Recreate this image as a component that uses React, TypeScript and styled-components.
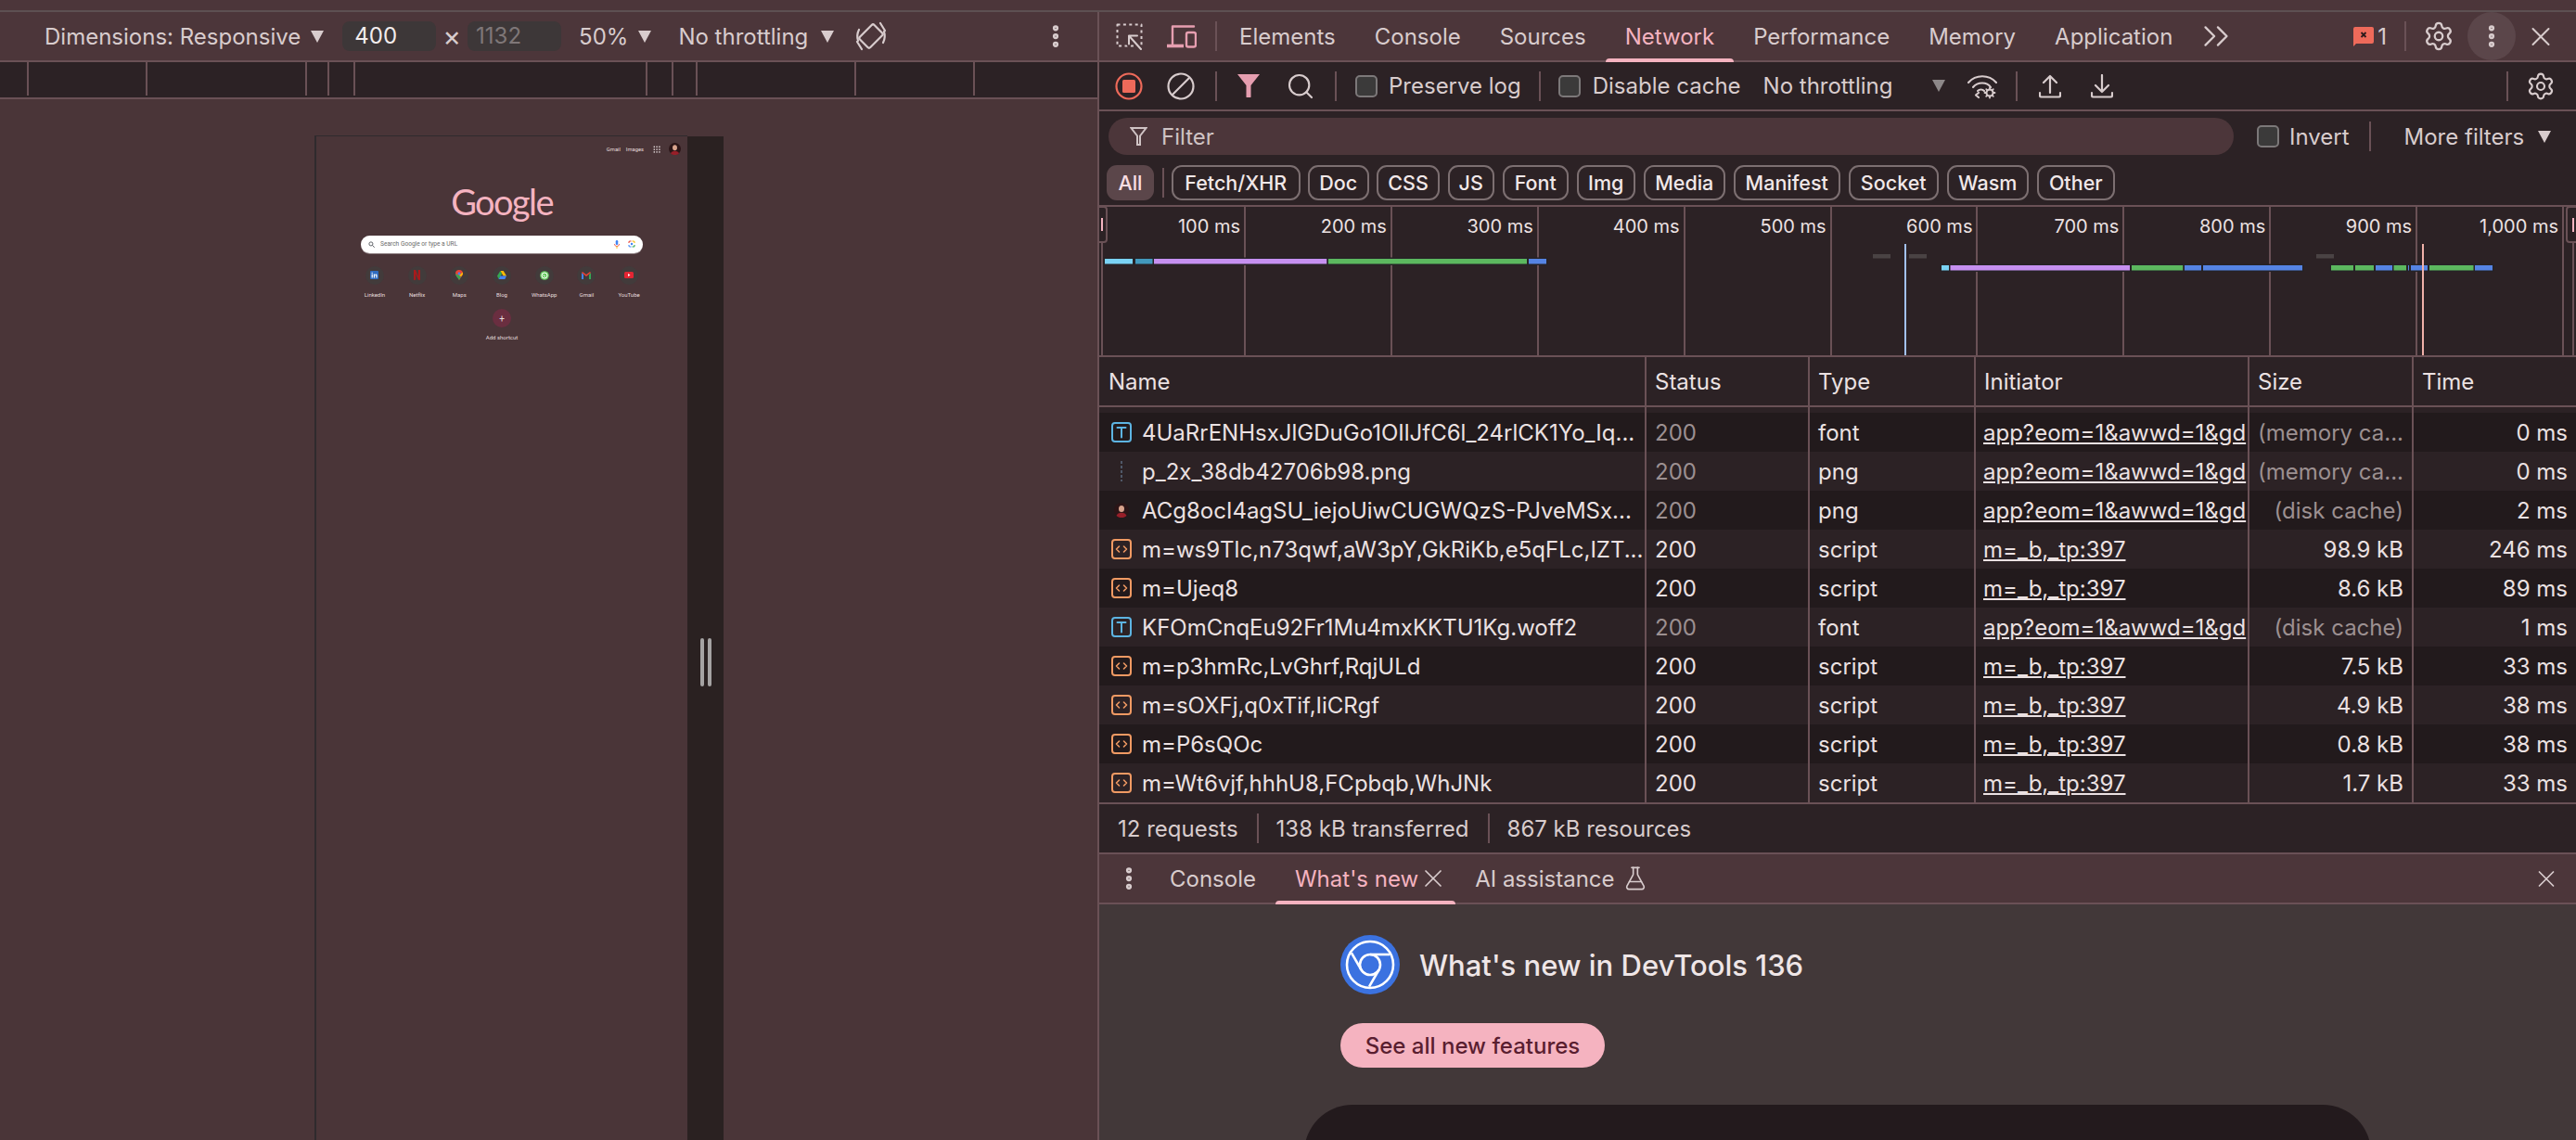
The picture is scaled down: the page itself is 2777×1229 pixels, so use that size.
import React from "react";
import styled, { createGlobalStyle } from "styled-components";
import { Settings, X, Search, ChevronsRight, FlaskConical, EllipsisVertical } from "lucide-react";

const line = "#6a5156";
const barBg = "#4c363a";
const darkBg = "#2c2225";
const pink = "#f5b3c0";
const txt = "#ebe1e2";
const dim = "#d8cccd";

const Global = createGlobalStyle`
  html, body { margin: 0; padding: 0; background: ${barBg}; }
  body { font-family: Inter, "Liberation Sans", sans-serif; font-size: 24px; color: ${txt}; overflow: hidden; }
  * { box-sizing: border-box; }
`;

const Page = styled.div`
  width: 2777px;
  height: 1229px;
  display: flex;
  flex-direction: column;
  overflow: hidden;
`;

const TopStrip = styled.div`
  height: 13px;
  flex: none;
  background: ${barBg};
  border-bottom: 2px solid #5d5052;
`;

const Main = styled.div`
  flex: 1;
  min-height: 0;
  display: flex;
`;

/* left: device mode */
const LeftPane = styled.div`
  width: 1185px;
  flex: none;
  display: flex;
  flex-direction: column;
  border-right: 2px solid ${line};
  background: #4a3538;
`;

const DeviceBar = styled.div`
  height: 54px;
  flex: none;
  display: flex;
  align-items: center;
  border-bottom: 2px solid ${line};
  background: ${barBg};
  padding-left: 48px;
`;

const Label = styled.span<{ $ml?: number; $c?: string }>`
  margin-left: ${(p) => p.$ml ?? 0}px;
  color: ${(p) => p.$c ?? dim};
  white-space: nowrap;
  flex: none;
`;

const Times = styled(Label)`
  font-size: 30px;
  line-height: 30px;
`;

const Arrow = styled.span<{ $ml?: number; $c?: string }>`
  margin-left: ${(p) => p.$ml ?? 0}px;
  flex: none;
  width: 0;
  height: 0;
  border-left: 7.5px solid transparent;
  border-right: 7.5px solid transparent;
  border-top: 13px solid ${(p) => p.$c ?? dim};
`;

const SizeInput = styled.div<{ $ml: number; $w: number; $muted?: boolean }>`
  margin-left: ${(p) => p.$ml}px;
  width: ${(p) => p.$w}px;
  height: 32px;
  flex: none;
  border-radius: 8px;
  background: #3d3738;
  padding-left: ${(p) => (p.$muted ? 9 : 13)}px;
  line-height: 32px;
  color: ${(p) => (p.$muted ? "#7f7778" : "#f2ecec")};
`;

const Ruler = styled.div`
  height: 40px;
  flex: none;
  display: flex;
  background: ${darkBg};
  border-bottom: 2px solid ${line};
  padding-bottom: 2px;
`;

const RulerTick = styled.div<{ $w: number }>`
  width: ${(p) => p.$w}px;
  flex: none;
  border-right: 2px solid ${line};
`;

const Canvas = styled.div`
  flex: 1;
  min-height: 0;
  display: flex;
  padding: 39px 0 0 339px;
  background: #4a3538;
`;

const Device = styled.div`
  width: 402px;
  flex: none;
  display: flex;
  flex-direction: column;
  align-items: center;
  border-left: 2px solid #2f2a2d;
  border-top: 1px solid #2f2a2d;
  font-family: Roboto, Arial, sans-serif;
  color: #e6dcdd;
`;

const DeviceHeader = styled.div`
  width: 100%;
  height: 27px;
  flex: none;
  display: flex;
  align-items: center;
  justify-content: flex-end;
  padding-right: 7px;
  font-size: 5.8px;
`;

const HeaderLink = styled.span<{ $mr: number }>`
  display: flex;
  margin-right: ${(p) => p.$mr}px;
`;

const Logo = styled.div`
  margin-top: 20px;
  height: 56px;
  font-family: Lato, sans-serif;
  font-size: 38px;
  line-height: 46px;
  letter-spacing: -1.6px;
  color: ${pink};
`;

const SearchBox = styled.div`
  width: 304px;
  height: 19.5px;
  flex: none;
  margin-top: 3.5px;
  display: flex;
  align-items: center;
  padding: 0 8px 0 8px;
  border-radius: 10px;
  background: #fff;
  box-shadow: 0 1px 0 #8d7f82;
  font-size: 6.6px;
  color: #6b6b6b;
`;

const SearchText = styled.span`
  margin-left: 6px;
  flex: 1;
`;

const Shortcuts = styled.div`
  width: 320px;
  margin-top: 13.5px;
  display: flex;
  flex-wrap: wrap;
  justify-content: center;
`;

const Tile = styled.div`
  width: 45.7px;
  height: 46.5px;
  display: flex;
  flex-direction: column;
  align-items: center;
  font-size: 6px;
  white-space: nowrap;
`;

const TileCircle = styled.div<{ $add?: boolean }>`
  width: 20px;
  height: 20px;
  flex: none;
  border-radius: 50%;
  display: flex;
  align-items: center;
  justify-content: center;
  background: ${(p) => (p.$add ? "#6a2e40" : "#423b3b")};
  color: #e6dcdd;
  font-size: 10px;
  margin-bottom: 7px;
`;

const ResizeBar = styled.div`
  width: 39px;
  flex: none;
  margin-top: 1px;
  display: flex;
  justify-content: center;
  gap: 4px;
  padding-top: 541px;
  background: #2a2121;
`;

const Grip = styled.div`
  width: 4px;
  height: 52px;
  border-radius: 2px;
  background: #a5a3a3;
`;

/* right: devtools */
const Tools = styled.div`
  flex: 1;
  min-width: 0;
  display: flex;
  flex-direction: column;
  background: ${darkBg};
`;

const MainTabs = styled.div`
  height: 54px;
  flex: none;
  display: flex;
  align-items: center;
  padding-left: 4px;
  background: ${barBg};
  border-bottom: 2px solid ${line};
`;

const IconSlot = styled.div<{ $w?: number; $ml?: number; $mr?: number }>`
  width: ${(p) => p.$w ?? 56}px;
  margin-left: ${(p) => p.$ml ?? 0}px;
  margin-right: ${(p) => p.$mr ?? 0}px;
  flex: none;
  display: flex;
  align-items: center;
  justify-content: center;
  color: ${dim};
`;

const Sep = styled.div<{ $ml?: number; $mr?: number; $h?: number }>`
  width: 2px;
  height: ${(p) => p.$h ?? 32}px;
  flex: none;
  margin-left: ${(p) => p.$ml ?? 0}px;
  margin-right: ${(p) => p.$mr ?? 0}px;
  background: ${line};
`;

const Tab = styled.div<{ $active?: boolean; $ml?: number }>`
  position: relative;
  height: 100%;
  flex: none;
  display: flex;
  align-items: center;
  margin-left: ${(p) => p.$ml ?? 0}px;
  padding: 0 21px;
  color: ${(p) => (p.$active ? pink : dim)};
  ${(p) =>
    p.$active &&
    `&::after {
      content: "";
      position: absolute;
      left: 0;
      right: 0;
      bottom: -2px;
      height: 4px;
      border-radius: 4px 4px 0 0;
      background: ${pink};
    }`}
`;

const TabClose = styled(X)`
  margin: 0 -13px 0 0;
  color: ${dim};
`;

const Flask = styled(FlaskConical)`
  margin-left: 8px;
`;

const Spring = styled.div`
  flex: 1;
`;

const HoverDots = styled.div`
  width: 52px;
  height: 52px;
  flex: none;
  margin-left: 14px;
  border-radius: 50%;
  background: #5b464a;
  display: flex;
  align-items: center;
  justify-content: center;
  color: ${dim};
`;

const NetBar = styled.div`
  height: 53px;
  flex: none;
  display: flex;
  align-items: center;
  padding-left: 4px;
  border-bottom: 2px solid ${line};
`;

const Check = styled.div<{ $ml: number }>`
  width: 24px;
  height: 24px;
  flex: none;
  margin-left: ${(p) => p.$ml}px;
  border: 2px solid #7c7879;
  border-radius: 5px;
  background: #3b3a3a;
`;

const FilterSection = styled.div`
  height: 103px;
  flex: none;
  display: flex;
  flex-direction: column;
  border-bottom: 2px solid ${line};
`;

const FilterRow = styled.div`
  height: 40px;
  margin-top: 7px;
  flex: none;
  display: flex;
  align-items: center;
  padding-left: 10px;
`;

const FilterInput = styled.div`
  width: 1213px;
  height: 40px;
  flex: none;
  display: flex;
  align-items: center;
  gap: 15px;
  padding-left: 23px;
  border-radius: 20px;
  background: ${barBg};
  color: #cfc3c4;
`;

const ChipRow = styled.div`
  margin-top: 11px;
  height: 38px;
  flex: none;
  display: flex;
  align-items: center;
  gap: 8.5px;
  padding-left: 8px;
  font-weight: 500;
  font-size: 21.5px;
`;

const Chip = styled.div<{ $w: number; $active?: boolean }>`
  width: ${(p) => p.$w}px;
  height: 38px;
  flex: none;
  display: flex;
  align-items: center;
  justify-content: center;
  border-radius: 11px;
  border: ${(p) => (p.$active ? "none" : "2px solid #7c6f71")};
  background: ${(p) => (p.$active ? "#5b464a" : "transparent")};
  color: ${(p) => (p.$active ? "#f8dde2" : "#f1e8e9")};
`;

const Overview = styled.div`
  position: relative;
  height: 162px;
  flex: none;
  display: flex;
  border-bottom: 2px solid ${line};
  overflow: hidden;
`;

const TickCell = styled.div<{ $w: number }>`
  width: ${(p) => p.$w}px;
  flex: none;
  border-right: 2px solid ${line};
  padding: 8px 4px 0 0;
  text-align: right;
  font-size: 20px;
  line-height: 26px;
  white-space: nowrap;
`;

const OverviewDrawing = styled.svg`
  position: absolute;
  left: 0;
  top: 0;
`;

const TableRow = styled.div<{ $h: number; $bg?: string; $line?: boolean }>`
  height: ${(p) => p.$h}px;
  flex: none;
  display: grid;
  grid-template-columns: 590px 176px 179px 295px 177px 1fr;
  background: ${(p) => p.$bg ?? darkBg};
  border-bottom: ${(p) => (p.$line ? `2px solid ${line}` : "none")};
`;

const Cell = styled.div<{ $right?: boolean; $muted?: boolean; $link?: boolean; $last?: boolean }>`
  min-width: 0;
  display: flex;
  align-items: center;
  justify-content: ${(p) => (p.$right ? "flex-end" : "flex-start")};
  padding: 0 9px;
  border-right: ${(p) => (p.$last ? "none" : `2px solid ${line}`)};
  color: ${(p) => (p.$muted ? "#9c9091" : txt)};
  white-space: nowrap;
  overflow: hidden;
  text-decoration: ${(p) => (p.$link ? "underline" : "none")};
  text-underline-offset: 2px;
`;

const NameHead = styled(Cell)`
  padding-left: 10px;
`;

const NameCell = styled(Cell)`
  gap: 11px;
  padding-left: 13px;
`;

const InitCell = styled(Cell)`
  padding: 0 0 0 8px;
`;

const FileIcon = styled.span`
  width: 22px;
  height: 22px;
  flex: none;
  display: flex;
  align-items: center;
  justify-content: center;
`;

const Footer = styled.div`
  height: 54px;
  flex: none;
  display: flex;
  align-items: center;
  padding-left: 20px;
  border-bottom: 2px solid ${line};
  color: ${dim};
`;

const DrawerTabs = styled.div`
  height: 54px;
  flex: none;
  display: flex;
  align-items: center;
  background: ${barBg};
  border-bottom: 2px solid ${line};
`;

const DrawerBody = styled.div`
  position: relative;
  flex: 1;
  min-height: 0;
  background: #423839;
  padding: 33px 0 0 260px;
  overflow: hidden;
`;

const NewsHead = styled.div`
  display: flex;
  align-items: center;
  gap: 21px;
  font-size: 31px;
  font-weight: 500;
  color: #efe6e7;
`;

const NewsButton = styled.div`
  width: 285px;
  height: 48px;
  margin-top: 31px;
  display: flex;
  align-items: center;
  justify-content: center;
  border-radius: 24px;
  background: ${pink};
  color: #5a1e30;
  font-weight: 500;
`;

const NewsCard = styled.div`
  width: 1150px;
  height: 80px;
  margin: 40px 0 0 -39px;
  border-radius: 52px 52px 0 0;
  background: #231a1d;
`;

/* icons */
const Svg = ({ w, h, children, stroke = "currentColor", sw = 2 }: { w: number; h: number; children: React.ReactNode; stroke?: string; sw?: number }) => (
  <svg width={w} height={h} viewBox={`0 0 ${w} ${h}`} fill="none" stroke={stroke} strokeWidth={sw} strokeLinecap="round" strokeLinejoin="round">
    {children}
  </svg>
);

const InspectIcon = () => (
  <Svg w={29} h={29}>
    <rect x="1.5" y="1.5" width="26" height="23" strokeDasharray="3 3.4" strokeLinecap="butt" />
    <path d="M14 13.5L27 28M14 13.5h9M14 13.5v9" stroke="#4c363a" strokeWidth="5" />
    <path d="M14 13.5L27 28M14 13.5h9M14 13.5v9" />
  </Svg>
);

const DeviceIcon = () => (
  <Svg w={33} h={25} stroke="#e69eb0" sw={2.4}>
    <path d="M7 1.5h23M7 1.5v19" />
    <path d="M1 22.5h18" strokeWidth="3.6" strokeLinecap="butt" />
    <rect x="22" y="8" width="10" height="15.5" rx="2" />
  </Svg>
);

const Dots = ({ h = 30 }: { h?: number }) => <EllipsisVertical size={h} strokeWidth={3} />;

const ErrorBadge = () => (
  <svg width="22" height="21" viewBox="0 0 22 21">
    <path d="M2 0h18a2 2 0 0 1 2 2v14a2 2 0 0 1-2 2H3l-3 3V2a2 2 0 0 1 2-2z" fill="#ee6a5a" />
    <path d="M8.5 6l5 5M13.5 6l-5 5" stroke="#2c1a1c" strokeWidth="1.8" />
  </svg>
);

const RecordIcon = () => (
  <svg width="30" height="30" viewBox="0 0 30 30">
    <circle cx="15" cy="15" r="13.5" fill="none" stroke="#ee6a5a" strokeWidth="2.2" />
    <rect x="8" y="8" width="14" height="14" rx="1.5" fill="#ee6a5a" />
  </svg>
);

const ClearIcon = () => (
  <Svg w={30} h={30} sw={2.2}>
    <circle cx="15" cy="15" r="13.5" />
    <path d="M6 24L24 6" />
  </Svg>
);

const Funnel = ({ solid }: { solid?: boolean }) =>
  solid ? (
    <svg width="24" height="25" viewBox="0 0 24 25">
      <path d="M0 0h24L14.5 12v12a2 2 0 0 1-5 0V12z" fill="#e69eb0" />
    </svg>
  ) : (
    <svg width="19" height="20" viewBox="0 0 19 20" fill="none" stroke="#cfc3c4" strokeWidth="2">
      <path d="M1.5 1h16L11 9.5V19H8V9.5z" />
    </svg>
  );

const WifiGear = () => (
  <Svg w={34} h={28} sw={2.2}>
    <path d="M2 10C10 1 24 1 32 10M7 15c5-6 15-6 19 0M12 19c2-2 5-2 7 0" />
    <path d="M13 21l-3 2.5 3 2.5" />
    <circle cx="25" cy="21" r="3.6" strokeWidth="2" />
    <path d="M25 15.5v2M25 24.5v2M19.5 21h2M28.5 21h2M21.2 17.2l1.4 1.4M27.4 23.4l1.4 1.4M21.2 24.8l1.4-1.4M27.4 18.6l1.4-1.4" strokeWidth="1.8" />
  </Svg>
);

const UploadIcon = () => (
  <Svg w={24} h={26} sw={2.2}>
    <path d="M12 20V2M5 9l7-7 7 7M1 20v3a1.5 1.5 0 0 0 1.5 1.5h19A1.5 1.5 0 0 0 23 23v-3" />
  </Svg>
);

const DownloadIcon = () => (
  <Svg w={24} h={26} sw={2.2}>
    <path d="M12 1v18M5 12l7 7 7-7M1 20v3a1.5 1.5 0 0 0 1.5 1.5h19A1.5 1.5 0 0 0 23 23v-3" />
  </Svg>
);

const RotateIcon = () => (
  <Svg w={36} h={38} sw={2.2}>
    <g transform="rotate(45 18 19)">
      <rect x="10" y="8" width="16" height="22" rx="2" />
    </g>
    <path d="M4 24a16 16 0 0 1 1-12M32 14a16 16 0 0 1-1 12M8 33l-5-8M28 5l5 8" />
  </Svg>
);

const FontIcon = () => (
  <Svg w={22} h={22} stroke="#5db4e2" sw={2}>
    <rect x="1" y="1" width="20" height="20" rx="3" />
    <path d="M6.5 6h9M11 6v10.5" />
  </Svg>
);

const ScriptIcon = () => (
  <Svg w={22} h={22} stroke="#f09a63" sw={2}>
    <rect x="1" y="1" width="20" height="20" rx="3" />
    <path d="M8.5 8l-3 3 3 3M13.5 8l3 3-3 3" strokeWidth="1.6" />
  </Svg>
);

const ThinImageIcon = () => (
  <svg width="22" height="22" viewBox="0 0 22 22">
    <path d="M11 0v22" stroke="#5f6f86" strokeWidth="1.4" strokeDasharray="3 2" />
  </svg>
);

const AvatarIcon = ({ size = 16 }: { size?: number }) => (
  <svg width={size} height={size} viewBox="0 0 16 16">
    <circle cx="8" cy="8" r="8" fill="#2b1517" />
    <ellipse cx="8" cy="6.500" rx="3" ry="3.600" fill="#d8a38c" />
    <path d="M2.500 14c1-4.500 10-4.500 11 0a8 8 0 0 1-11 0z" fill="#971f29" />
  </svg>
);

const ChromeLogo = () => (
  <svg width="64" height="64" viewBox="0 0 64 64" style={{ flex: "none" }}>
    <circle cx="32" cy="32" r="32" fill="#3b72e0" />
    <g fill="none" stroke="#fff" strokeWidth="2.6">
      <circle cx="32" cy="32" r="25" />
      <circle cx="32" cy="32" r="11" />
      <path d="M32 21h21" />
      <path d="M32 21h21" transform="rotate(120 32 32)" />
      <path d="M32 21h21" transform="rotate(240 32 32)" />
    </g>
  </svg>
);

const SmallSearch = () => (
  <svg width="7" height="7" viewBox="0 0 24 24" fill="none" stroke="#5f6368" strokeWidth="3.4">
    <circle cx="10" cy="10" r="7" />
    <path d="M15 15l8 8" />
  </svg>
);

const MicIcon = () => (
  <svg width="6" height="9" viewBox="0 0 12 18" style={{ marginRight: 9 }}>
    <rect x="3.500" y="0" width="5" height="10" rx="2.500" fill="#4285f4" />
    <path d="M1 8c0 3 2 5 5 5s5-2 5-5" fill="none" stroke="#ea4335" strokeWidth="1.6" />
    <path d="M6 13v5" stroke="#fbbc04" strokeWidth="1.8" />
  </svg>
);

const LensIcon = () => (
  <svg width="8" height="8" viewBox="0 0 16 16" fill="none" strokeWidth="2.2">
    <path d="M2 6V4a2 2 0 0 1 2-2h3" stroke="#ea4335" />
    <path d="M9 2h3a2 2 0 0 1 2 2v2" stroke="#fbbc04" />
    <path d="M14 10v2a2 2 0 0 1-2 2H9" stroke="#34a853" />
    <path d="M7 14H4a2 2 0 0 1-2-2v-2" stroke="#4285f4" />
    <circle cx="8" cy="8" r="2.400" fill="#4285f4" stroke="none" />
  </svg>
);

const AppsIcon = () => (
  <svg width="8" height="8" viewBox="0 0 8 8" fill="#e6dcdd">
    {[0.6, 3.4, 6.2].flatMap((y) => [0.6, 3.4, 6.2].map((x) => <rect key={`${x}-${y}`} x={x} y={y} width="1.4" height="1.4" />))}
  </svg>
);

const LinkedIn = () => (
  <svg width="9" height="9" viewBox="0 0 9 9">
    <rect width="9" height="9" rx="1" fill="#2f6bc0" />
    <path d="M1.600 3.600h1.200v3.800H1.600zM1.600 1.700h1.200v1.100H1.600zM3.800 3.600H5v.6c.3-.5.7-.7 1.200-.7 1 0 1.300.6 1.300 1.600v2.300H6.300V5.400c0-.5-.1-.9-.6-.9s-.7.4-.7.9v2H3.800z" fill="#fff" />
  </svg>
);

const Netflix = () => (
  <svg width="7" height="11" viewBox="0 0 7 11">
    <path d="M0 0h2.200l2.600 7V0H7v11l-2.200-.3L2.200 4v6.700L0 11z" fill="#a81a1c" />
  </svg>
);

const MapsPin = () => (
  <svg width="8" height="11" viewBox="0 0 8 11">
    <path d="M4 0a4 4 0 0 1 4 4c0 2.500-3 4.500-4 7-1-2.500-4-4.500-4-7a4 4 0 0 1 4-4z" fill="#ea4335" />
    <path d="M0 4c0 2.500 3 4.500 4 7l2-4-4-2z" fill="#34a853" />
    <path d="M7.600 2.500L4 6l2 1c1-1 2-2 2-3z" fill="#fbbc04" />
    <circle cx="4" cy="4" r="1.400" fill="#4285f4" />
  </svg>
);

const DriveIcon = () => (
  <svg width="10" height="9" viewBox="0 0 10 9">
    <path d="M3.300 0h3.400l3.300 5.600H6.700z" fill="#fbbc04" />
    <path d="M3.300 0L0 5.600 1.700 9l3.300-5.800z" fill="#34a853" />
    <path d="M1.700 9h6.600L10 5.600H3.400z" fill="#4285f4" />
  </svg>
);

const WhatsApp = () => (
  <svg width="10" height="10" viewBox="0 0 10 10">
    <circle cx="5" cy="5" r="4.800" fill="#67c95f" />
    <circle cx="5" cy="5" r="3" fill="none" stroke="#fff" strokeWidth="1" />
    <path d="M3.800 4.200c.2 1 .9 1.700 2 2" stroke="#fff" strokeWidth="0.900" fill="none" />
  </svg>
);

const GmailIcon = () => (
  <svg width="10" height="8" viewBox="0 0 10 8">
    <path d="M0 1v7h2V3z" fill="#4285f4" />
    <path d="M10 1v7H8V3z" fill="#34a853" />
    <path d="M0 1l5 4 5-4-1-1-4 3-4-3z" fill="#ea4335" />
  </svg>
);

const YouTube = () => (
  <svg width="10" height="7" viewBox="0 0 10 7">
    <rect width="10" height="7" rx="1.500" fill="#e32533" />
    <path d="M4 2l2.500 1.500L4 5z" fill="#fff" />
  </svg>
);

const shortcuts: { label: string; icon: React.ReactNode }[] = [
  { label: "LinkedIn", icon: <LinkedIn /> },
  { label: "Netflix", icon: <Netflix /> },
  { label: "Maps", icon: <MapsPin /> },
  { label: "Blog", icon: <DriveIcon /> },
  { label: "WhatsApp", icon: <WhatsApp /> },
  { label: "Gmail", icon: <GmailIcon /> },
  { label: "YouTube", icon: <YouTube /> },
];

const rulerStops = [30, 158, 330, 354, 382, 697, 725, 751, 922, 1050];
const ticks = ["100 ms", "200 ms", "300 ms", "400 ms", "500 ms", "600 ms", "700 ms", "800 ms", "900 ms", "1,000 ms"];
const chips: [string, number][] = [
  ["Fetch/XHR", 138.5],
  ["Doc", 65.5],
  ["CSS", 68],
  ["JS", 50.5],
  ["Font", 71.5],
  ["Img", 63.5],
  ["Media", 88.5],
  ["Manifest", 115.5],
  ["Socket", 97.5],
  ["Wasm", 88.5],
  ["Other", 84.5],
];

const C = { cyan: "#7ad3f5", teal: "#4299bd", purple: "#c690f0", green: "#5cb85f", blue: "#5584e4", gray: "#4a4344" };
// network overview segments in page pixels: [start, end, colour]
const topBars: [number, number, string][] = [
  [1191, 1221, C.cyan],
  [1224, 1243, C.teal],
  [1244, 1430.5, C.purple],
  [1432, 1646, C.green],
  [1648, 1667, C.blue],
];
const lowBars: [number, number, string][] = [
  [2093, 2101, C.cyan],
  [2102.5, 2296, C.purple],
  [2298, 2353.5, C.green],
  [2355, 2373, C.blue],
  [2375, 2482, C.blue],
  [2513, 2537, C.green],
  [2539, 2559, C.green],
  [2561, 2579, C.blue],
  [2580.5, 2594, C.green],
  [2596, 2597, C.blue],
  [2599, 2617, C.blue],
  [2619, 2667, C.green],
  [2668, 2687, C.blue],
];
const grayBars = [2019, 2058, 2497];

const OX = 1185;
const OY = 223;

const OverviewBars = () => (
  <OverviewDrawing width="1592" height="160" viewBox="0 0 1592 160">
    {[...topBars.map((b) => [...b, 279] as const), ...lowBars.map((b) => [...b, 286] as const)].map(([a, b, c, y]) => (
      <rect key={`${a}-${y}`} x={a - OX} y={y - OY} width={b - a} height="5.500" fill={c} stroke="#262226" strokeWidth="3" paintOrder="stroke" />
    ))}
    {grayBars.map((x) => (
      <rect key={x} x={x - OX} y={274 - OY} width="19" height="4.500" fill={C.gray} />
    ))}
    <path d={`M${2054 - OX} ${263 - OY}V160`} stroke="#a3c2f5" strokeWidth="2" />
    <path d={`M${2612 - OX} ${263 - OY}V160`} stroke="#f0b1a9" strokeWidth="2" />
    <path d="M3 37V160" stroke={line} strokeWidth="2" />
    <path d="M0 0h5a3 3 0 0 1 3 3v32a3 3 0 0 1-3 3h-5" fill="#2c2225" stroke={line} strokeWidth="2" />
    <path d="M3 12v14" stroke={pink} strokeWidth="2" />
    <path d="M1589 37V160" stroke={line} strokeWidth="2" />
    <path d="M1592 0h-7a3 3 0 0 0-3 3v32a3 3 0 0 0 3 3h7" fill="#2c2225" stroke={line} strokeWidth="2" />
    <path d="M1589 12v15" stroke={pink} strokeWidth="2" />
  </OverviewDrawing>
);

type Req = { name: string; kind: "font" | "script" | "thin" | "avatar"; cached: boolean; type: string; init: string; size: string; time: string };
const APP = "app?eom=1&awwd=1&gd";
const TP = "m=_b,_tp:397";
const requests: Req[] = [
  { name: "4UaRrENHsxJlGDuGo1OIlJfC6l_24rlCK1Yo_Iq...", kind: "font", cached: true, type: "font", init: APP, size: "(memory ca...", time: "0 ms" },
  { name: "p_2x_38db42706b98.png", kind: "thin", cached: true, type: "png", init: APP, size: "(memory ca...", time: "0 ms" },
  { name: "ACg8ocI4agSU_iejoUiwCUGWQzS-PJveMSx...", kind: "avatar", cached: true, type: "png", init: APP, size: "(disk cache)", time: "2 ms" },
  { name: "m=ws9Tlc,n73qwf,aW3pY,GkRiKb,e5qFLc,IZT...", kind: "script", cached: false, type: "script", init: TP, size: "98.9 kB", time: "246 ms" },
  { name: "m=Ujeq8", kind: "script", cached: false, type: "script", init: TP, size: "8.6 kB", time: "89 ms" },
  { name: "KFOmCnqEu92Fr1Mu4mxKKTU1Kg.woff2", kind: "font", cached: true, type: "font", init: APP, size: "(disk cache)", time: "1 ms" },
  { name: "m=p3hmRc,LvGhrf,RqjULd", kind: "script", cached: false, type: "script", init: TP, size: "7.5 kB", time: "33 ms" },
  { name: "m=sOXFj,q0xTif,IiCRgf", kind: "script", cached: false, type: "script", init: TP, size: "4.9 kB", time: "38 ms" },
  { name: "m=P6sQOc", kind: "script", cached: false, type: "script", init: TP, size: "0.8 kB", time: "38 ms" },
  { name: "m=Wt6vjf,hhhU8,FCpbqb,WhJNk", kind: "script", cached: false, type: "script", init: TP, size: "1.7 kB", time: "33 ms" },
];

const kindIcon = { font: <FontIcon />, script: <ScriptIcon />, thin: <ThinImageIcon />, avatar: <AvatarIcon /> };

export default function App() {
  return (
    <Page>
      <Global />
      <TopStrip />
      <Main>
        <LeftPane>
          <DeviceBar>
            <Label>Dimensions: Responsive</Label>
            <Arrow $ml={11} />
            <SizeInput $ml={20} $w={101}>400</SizeInput>
            <Times $ml={7}>×</Times>
            <SizeInput $ml={7} $w={101} $muted>1132</SizeInput>
            <Label $ml={19}>50%</Label>
            <Arrow $ml={11} />
            <Label $ml={29}>No throttling</Label>
            <Arrow $ml={14} />
            <IconSlot $w={36} $ml={22}><RotateIcon /></IconSlot>
            <Spring />
            <IconSlot $w={36} $mr={27}><Dots /></IconSlot>
          </DeviceBar>
          <Ruler>
            {rulerStops.map((x, i) => (
              <RulerTick key={x} $w={x - (i ? rulerStops[i - 1] : 0) + (i ? 0 : 1)} />
            ))}
          </Ruler>
          <Canvas>
            <Device>
              <DeviceHeader>
                <HeaderLink $mr={6}>Gmail</HeaderLink>
                <HeaderLink $mr={10}>Images</HeaderLink>
                <HeaderLink $mr={9}><AppsIcon /></HeaderLink>
                <AvatarIcon size={13} />
              </DeviceHeader>
              <Logo>Google</Logo>
              <SearchBox>
                <SmallSearch />
                <SearchText>Search Google or type a URL</SearchText>
                <MicIcon />
                <LensIcon />
              </SearchBox>
              <Shortcuts>
                {shortcuts.map((s) => (
                  <Tile key={s.label}>
                    <TileCircle>{s.icon}</TileCircle>
                    {s.label}
                  </Tile>
                ))}
                <Tile>
                  <TileCircle $add>+</TileCircle>
                  Add shortcut
                </Tile>
              </Shortcuts>
            </Device>
            <ResizeBar>
              <Grip />
              <Grip />
            </ResizeBar>
          </Canvas>
        </LeftPane>
        <Tools>
          <MainTabs>
            <IconSlot><InspectIcon /></IconSlot>
            <IconSlot><DeviceIcon /></IconSlot>
            <Sep $ml={9} $mr={3} />
            {["Elements", "Console", "Sources", "Network", "Performance", "Memory", "Application"].map((t) => (
              <Tab key={t} $active={t === "Network"}>{t}</Tab>
            ))}
            <IconSlot $w={46} $ml={3}><ChevronsRight size={46} strokeWidth={1.2} /></IconSlot>
            <Spring />
            <ErrorBadge />
            <Label $ml={4}>1</Label>
            <Sep $ml={19} />
            <IconSlot $w={34} $ml={18}><Settings size={34} strokeWidth={1.6} /></IconSlot>
            <HoverDots><Dots /></HoverDots>
            <IconSlot $w={34} $ml={10} $mr={21}><X size={37} strokeWidth={1.4} /></IconSlot>
          </MainTabs>
          <NetBar>
            <IconSlot><RecordIcon /></IconSlot>
            <IconSlot><ClearIcon /></IconSlot>
            <Sep $ml={9} $mr={6} />
            <IconSlot><Funnel solid /></IconSlot>
            <IconSlot><Search size={32} strokeWidth={1.6} /></IconSlot>
            <Sep $ml={9} />
            <Check $ml={20} />
            <Label $ml={12}>Preserve log</Label>
            <Sep $ml={19} />
            <Check $ml={19} />
            <Label $ml={13}>Disable cache</Label>
            <Label $ml={24}>No throttling</Label>
            <Arrow $ml={42} $c="#8d8889" />
            <IconSlot $w={34} $ml={23}><WifiGear /></IconSlot>
            <Sep $ml={19} />
            <IconSlot $w={24} $ml={23}><UploadIcon /></IconSlot>
            <IconSlot $w={24} $ml={32}><DownloadIcon /></IconSlot>
            <Spring />
            <Sep $mr={19} />
            <IconSlot $w={32} $mr={22}><Settings size={34} strokeWidth={1.6} /></IconSlot>
          </NetBar>
          <FilterSection>
            <FilterRow>
              <FilterInput><Funnel />Filter</FilterInput>
              <Check $ml={25} />
              <Label $ml={11}>Invert</Label>
              <Sep $ml={21} />
              <Label $ml={36}>More filters</Label>
              <Arrow $ml={15} />
            </FilterRow>
            <ChipRow>
              <Chip $active $w={51}>All</Chip>
              <Sep $h={32} />
              {chips.map(([c, w]) => <Chip key={c} $w={w}>{c}</Chip>)}
            </ChipRow>
          </FilterSection>
          <Overview>
            {ticks.map((t, i) => (
              <TickCell key={t} $w={i ? 157.9 : 158}>{t}</TickCell>
            ))}
            <OverviewBars />
          </Overview>
          <TableRow $h={54} $line>
            <NameHead>Name</NameHead>
            <Cell>Status</Cell>
            <Cell>Type</Cell>
            <Cell>Initiator</Cell>
            <Cell>Size</Cell>
            <Cell $last>Time</Cell>
          </TableRow>
          <TableRow $h={6}>
            <Cell /><Cell /><Cell /><Cell /><Cell /><Cell $last />
          </TableRow>
          {requests.map((r, i) => (
            <TableRow key={r.name} $h={i === requests.length - 1 ? 44 : 42} $bg={i % 2 ? darkBg : "#221a1c"} $line={i === requests.length - 1}>
              <NameCell><FileIcon>{kindIcon[r.kind]}</FileIcon>{r.name}</NameCell>
              <Cell $muted={r.cached}>200</Cell>
              <Cell>{r.type}</Cell>
              <InitCell $link>{r.init}</InitCell>
              <Cell $right $muted={r.cached}>{r.size}</Cell>
              <Cell $right $last>{r.time}</Cell>
            </TableRow>
          ))}
          <Footer>
            <Label>12 requests</Label>
            <Sep $ml={20} />
            <Label $ml={19}>138 kB transferred</Label>
            <Sep $ml={20} />
            <Label $ml={19}>867 kB resources</Label>
          </Footer>
          <DrawerTabs>
            <IconSlot $w={36} $ml={14}><Dots /></IconSlot>
            <Tab $ml={5}>Console</Tab>
            <Tab $active>What's new<TabClose size={32} strokeWidth={1.3} /></Tab>
            <Tab>AI assistance<Flask size={28} strokeWidth={1.4} /></Tab>
            <Spring />
            <IconSlot $w={30} $mr={17}><X size={37} strokeWidth={1.4} /></IconSlot>
          </DrawerTabs>
          <DrawerBody>
            <NewsHead><ChromeLogo />What's new in DevTools 136</NewsHead>
            <NewsButton>See all new features</NewsButton>
            <NewsCard />
          </DrawerBody>
        </Tools>
      </Main>
    </Page>
  );
}
